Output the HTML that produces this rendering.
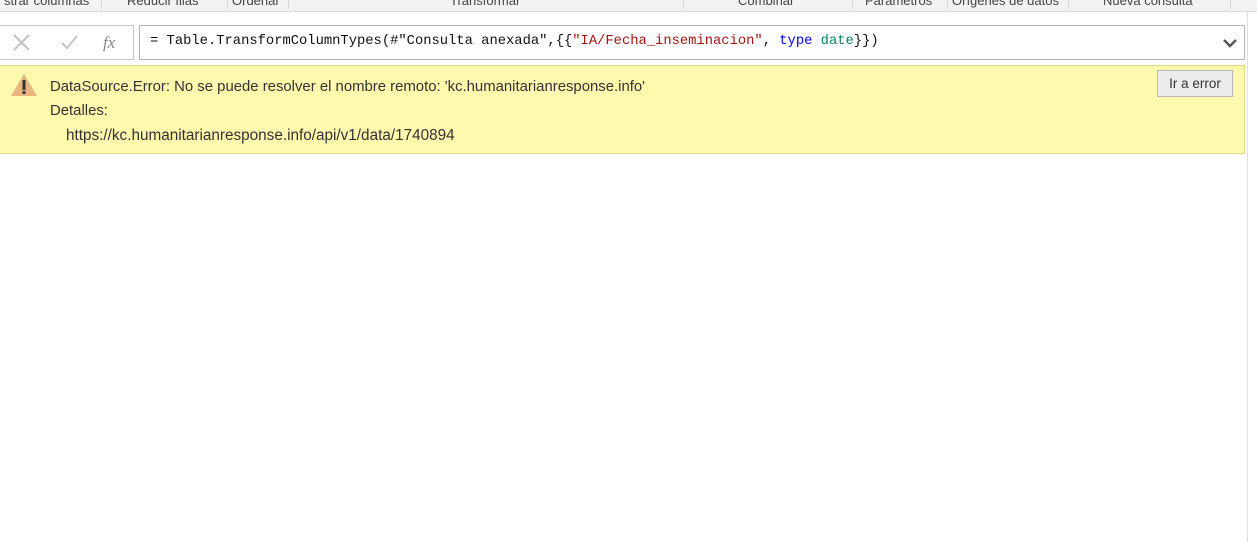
<!DOCTYPE html>
<html><head><meta charset="utf-8"><style>
*{margin:0;padding:0;box-sizing:border-box}
body{width:1257px;height:542px;background:#fff;position:relative;overflow:hidden;font-family:"Liberation Sans",sans-serif;color:#333}
.top{position:absolute;left:0;top:0;width:1257px;height:12px;background:#f3f3f3;border-bottom:1px solid #d8d8d8;overflow:hidden}
.top span{position:absolute;top:-7px;font-size:13px;color:#444;white-space:nowrap}
.top i{position:absolute;top:0;width:1px;height:9px;background:#d6d6d6}
.vline{position:absolute;left:1247px;top:12px;width:1px;height:530px;background:#e0e0e0}
.lbox{position:absolute;left:-2px;top:25px;width:136px;height:35px;border:1px solid #c6c6c6;background:#fff}
.fbox{position:absolute;left:139px;top:25px;width:1106px;height:35px;border:1px solid #b4b4b4;background:#fff}
.code{position:absolute;left:10px;top:8px;font-family:"Liberation Mono",monospace;font-size:13.8px;color:#111;white-space:pre}
.err{position:absolute;left:-1px;top:65px;width:1246px;height:89px;background:#fff9ae;border:1px solid #dcd98a}
.t{position:absolute;font-size:14.9px;color:#333;white-space:nowrap}
.btn{position:absolute;left:1157px;top:70px;width:76px;height:27px;background:#ececec;border:1px solid #b8b8b8;font-size:13.5px;color:#333;text-align:center;line-height:25px}
</style></head><body>
<div class="top">
<span style="left:4px">strar columnas</span><i style="left:101px"></i>
<span style="left:127px">Reducir filas</span><i style="left:227px"></i>
<span style="left:232px">Ordenar</span><i style="left:288px"></i>
<span style="left:450px">Transformar</span><i style="left:683px"></i>
<span style="left:738px">Combinar</span><i style="left:852px"></i>
<span style="left:865px">Parámetros</span><i style="left:947px"></i>
<span style="left:952px">Orígenes de datos</span><i style="left:1068px"></i>
<span style="left:1103px">Nueva consulta</span><i style="left:1230px"></i>
</div>
<div class="vline"></div>
<div class="lbox">
<svg width="136" height="35" style="position:absolute;left:0;top:0">
<path d="M15 9 L30 24 M30 9 L15 24" stroke="#c4c4c4" stroke-width="2" fill="none"/>
<path d="M63 17 L68 22 L78 10" stroke="#c4c4c4" stroke-width="2" fill="none"/>
<text x="104" y="22" font-family="Liberation Serif,serif" font-style="italic" font-size="17" fill="#888">fx</text>
</svg>
</div>
<div class="fbox">
<div class="code">= Table.TransformColumnTypes(#"Consulta anexada",{{<span style="color:#a31515">"IA/Fecha_inseminacion"</span>, <span style="color:#0000ff">type</span> <span style="color:#09885a">date</span>}})</div>
<svg width="16" height="12" style="position:absolute;left:1082px;top:11px"><path d="M2 3 L8 9 L14 3" stroke="#555" stroke-width="2.4" fill="none"/></svg>
</div>
<div class="err"></div>
<svg width="28" height="24" style="position:absolute;left:10px;top:73px">
<path d="M14 1 L27 23 L1 23 Z" fill="#e8b57e"/>
<rect x="12.5" y="7" width="3" height="10" fill="#333"/><rect x="12.5" y="18" width="3" height="3" fill="#333"/>
</svg>
<div class="t" style="left:50px;top:79px">DataSource.Error: No se puede resolver el nombre remoto: 'kc.humanitarianresponse.info'</div>
<div class="t" style="left:50px;top:103px">Detalles:</div>
<div class="t" style="left:66px;top:127px;font-size:15.3px">https://kc.humanitarianresponse.info/api/v1/data/1740894</div>
<div class="btn">Ir a error</div>
</body></html>
